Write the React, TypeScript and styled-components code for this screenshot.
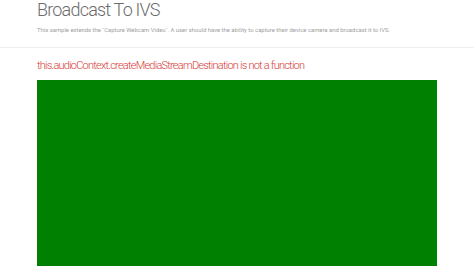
import React from "react";
import styled, { createGlobalStyle } from "styled-components";

const GlobalStyle = createGlobalStyle`
  html, body {
    margin: 0;
    padding: 0;
    background: #ffffff;
    overflow: hidden;
  }
  body {
    font-family: Roboto, "Liberation Sans", sans-serif;
  }
`;

const Page = styled.div`
  width: 474px;
  height: 266px;
  overflow: hidden;
`;

const Header = styled.header`
  padding: 0 37px;
  border-bottom: 1px solid #efefef;
  height: 48px;
  box-sizing: border-box;
`;

const Title = styled.h1`
  margin: 0;
  font-weight: 300;
  font-size: 18px;
  line-height: 20px;
  letter-spacing: -0.8px;
  color: #6b6b6b;
`;

const Lead = styled.p`
  margin: 6px 0 0;
  font-size: 5.9px;
  line-height: 8px;
  font-weight: 400;
  color: #a0a0a0;
  white-space: nowrap;
`;

const Main = styled.main`
  padding: 11px 37px 0;
`;

const ErrorText = styled.div`
  font-weight: 300;
  font-size: 11px;
  line-height: 14px;
  letter-spacing: -0.77px;
  color: #d83a38;
  margin-bottom: 7px;
`;

const Video = styled.div`
  width: 400px;
  height: 200px;
  background: #008000;
`;

export default function App() {
  return (
    <Page>
      <GlobalStyle />
      <Header>
        <Title>Broadcast To IVS</Title>
        <Lead>
          This sample extends the `Capture Webcam Video`. A user should have the
          ability to capture their device camera and broadcast it to IVS.
        </Lead>
      </Header>
      <Main>
        <ErrorText>this.audioContext.createMediaStreamDestination is not a function</ErrorText>
        <Video />
      </Main>
    </Page>
  );
}
